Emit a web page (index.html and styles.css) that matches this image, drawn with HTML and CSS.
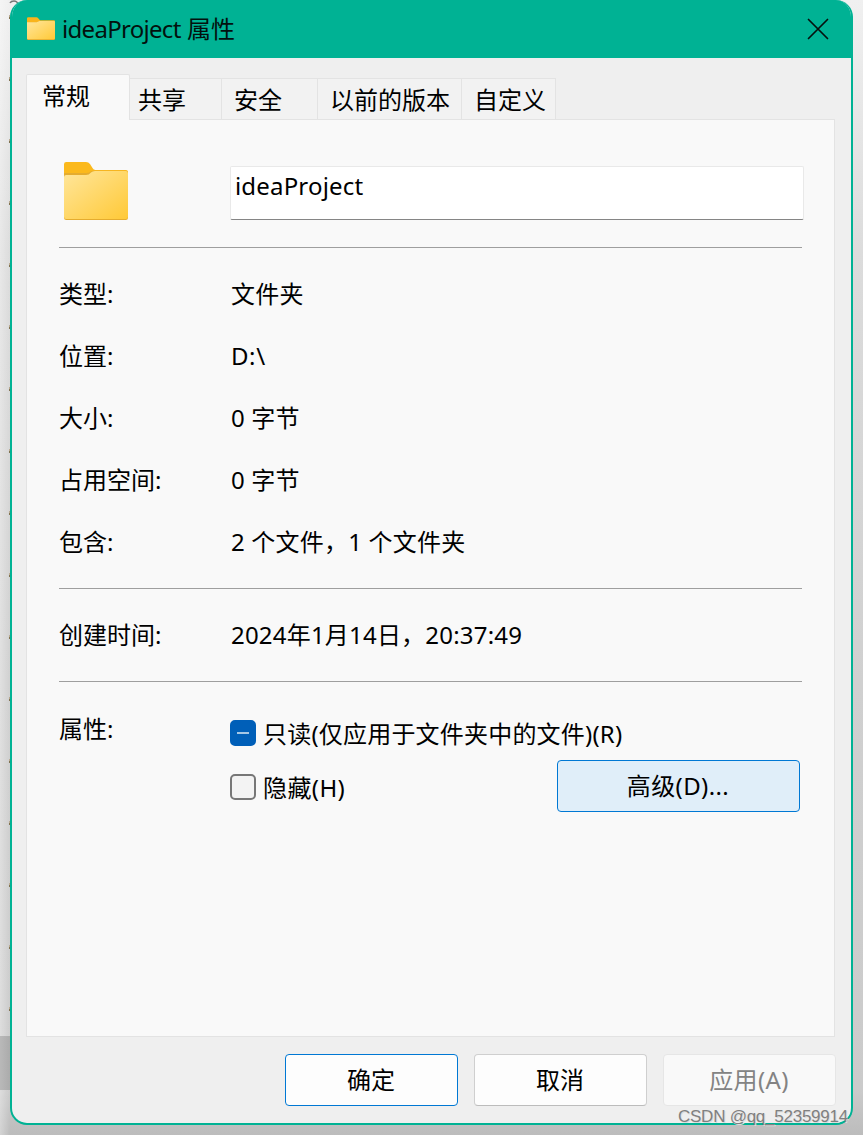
FILE: index.html
```html
<!DOCTYPE html>
<html lang="zh-CN">
<head>
<meta charset="utf-8">
<title>ideaProject 属性</title>
<link rel="stylesheet" href="styles.css">
</head>
<body>
<div class="backdrop">
  <div class="ticks"></div>
  <div class="backdrop-row"></div>
  <svg class="backdrop-mark" width="10" height="5" viewBox="0 0 10 5"><path d="M1 3Q2 1 5 1Q8 1 9 4" fill="none" stroke="#777" stroke-width="1.5"/></svg>
</div>
<main class="window">
  <header class="titlebar">
    <svg class="title-icon" width="28" height="23" viewBox="0 0 28 23">
      <defs><linearGradient id="fold" x1="0" y1="0" x2="1" y2="1"><stop offset="0" stop-color="#ffe69b"/><stop offset="1" stop-color="#ffc937"/></linearGradient></defs>
      <path d="M0 7V1.5Q0 .3 1.2 .3H9.5Q10.5 .3 11.2 1.2L13 3.2H27Q28 3.2 28 4.2V8H0z" fill="#f9b41b"/>
      <path d="M0 5.2H9.7L12.5 3.9H27Q28 3.9 28 5V21.7Q28 23 26.8 23H1.2Q0 23 0 21.7z" fill="#e3a82c"/>
      <path d="M0 5.2H9.7L12.5 3.9H27Q28 3.9 28 5V21.2Q28 22.3 26.8 22.3H1.2Q0 22.3 0 21.2z" fill="url(#fold)"/>
    </svg>
    <h1 class="title"><span class="title-name">ideaProject</span> 属性</h1>
    <svg class="close" width="22" height="22" viewBox="0 0 22 22"><path d="M1.5 1.5L20.5 20.5M20.5 1.5L1.5 20.5" stroke="#06110e" stroke-width="1.7" stroke-linecap="round"/></svg>
  </header>
  <nav class="tabs">
    <div class="tab tab-active">常规</div>
    <div class="tab tab-share">共享</div>
    <div class="tab tab-security">安全</div>
    <div class="tab tab-versions">以前的版本</div>
    <div class="tab tab-custom">自定义</div>
  </nav>
  <section class="panel">
    <div class="name-row">
      <svg class="folder" width="64" height="58" viewBox="0 0 64 58">
        <path d="M0 15V2.2Q0 0 2.2 0H22Q24.5 0 26 2L28.5 6Q29.5 8 31.5 8H62Q64 8 64 10V20H0z" fill="#fbb91c"/>
        <path d="M0 11H22Q25 11 26.8 9.5Q28 8.8 30 8.8H61.8Q64 8.8 64 11V55.8Q64 58 61.8 58H2.2Q0 58 0 55.8z" fill="#e5ac2e"/>
        <path d="M0 15Q0 13 2.2 13H22Q25 13 27 10.5Q28.5 9 31 9H61.8Q64 9 64 11.2V54.8Q64 57 61.8 57H2.2Q0 57 0 54.8z" fill="url(#fold)"/>
      </svg>
      <div class="name-field">ideaProject</div>
    </div>
    <dl class="facts facts-main">
      <dt>类型:</dt><dd>文件夹</dd>
      <dt>位置:</dt><dd class="path">D:\</dd>
      <dt>大小:</dt><dd>0 字节</dd>
      <dt>占用空间:</dt><dd>0 字节</dd>
      <dt>包含:</dt><dd>2 个文件，1 个文件夹</dd>
    </dl>
    <dl class="facts facts-date">
      <dt>创建时间:</dt><dd>2024年1月14日，20:37:49</dd>
    </dl>
    <div class="attributes">
      <div class="attr-label">属性:</div>
      <div class="attr-options">
        <div class="option"><span class="check check-mixed"></span><span class="readonly">只读(仅应用于文件夹中的文件)(R)</span></div>
        <div class="option-line">
          <div class="option"><span class="check"></span><span class="hidden-label">隐藏(H)</span></div>
          <div class="button advanced">高级(D)...</div>
        </div>
      </div>
    </div>
  </section>
  <footer class="actions">
    <div class="button primary">确定</div>
    <div class="button">取消</div>
    <div class="button disabled">应用(A)</div>
  </footer>
</main>
<div class="watermark">CSDN @qq_52359914</div>
</body>
</html>
```

FILE: styles.css
```css
* { box-sizing: border-box; }
svg { flex: none; }
body {
  margin: 0;
  width: 863px;
  height: 1135px;
  overflow: hidden;
  position: relative;
  padding-left: 10px;
  font-family: "Noto Sans", "Noto Sans CJK SC", sans-serif;
  font-size: 24px;
  line-height: 32px;
  color: #000;
  background: linear-gradient(#f0f0f0, #dcdcdc 22%, #d0d0d0 60%, #cbcbcb 96%, #bcbcbc);
}
.backdrop {
  position: absolute;
  left: 0;
  top: 0;
  width: 10px;
  height: 1135px;
  background: linear-gradient(90deg, rgba(255,255,255,.35), rgba(255,255,255,0));
}
.backdrop-row {
  position: absolute;
  top: 1036px;
  width: 10px;
  height: 54px;
  background: linear-gradient(90deg, #b9b9b9, #ababab);
}
.backdrop-mark { position: absolute; left: 9px; top: 0; }
.ticks {
  position: absolute;
  left: 9px;
  top: 15px;
  width: 1px;
  height: 1060px;
  background: repeating-linear-gradient(#b8a890 0 2px, #80724f 2px 4px, transparent 4px 62px);
}
.window {
  position: relative;
  width: 843px;
  height: 1125px;
  border: 2px solid #00b294;
  border-top: 0;
  border-radius: 17px;
  overflow: hidden;
  background: #efefef;
  display: flex;
  flex-direction: column;
}
.titlebar {
  flex: none;
  height: 58px;
  background: #00b294;
  display: flex;
  align-items: center;
  padding: 0 22px 0 15px;
}
.title-icon { margin-top: -1px; }
.title { margin: 0 0 1px 7px; font-size: 24px; font-weight: 400; color: #03110e; white-space: pre; }
.title-name { letter-spacing: -.7px; }
.close { margin-left: auto; }
.tabs {
  flex: none;
  display: flex;
  align-items: flex-end;
  height: 62px;
  padding-left: 14px;
  position: relative;
  z-index: 1;
}
.tab {
  height: 42px;
  border: 1px solid #e3e3e3;
  border-left: 0;
  background: #f2f2f2;
  padding-top: 5px;
  white-space: nowrap;
}
.tab-active {
  width: 104px;
  height: 46px;
  padding-left: 15px;
  border-left: 1px solid #e3e3e3;
  border-bottom: 0;
  border-radius: 2px 2px 0 0;
  background: #f9f9f9;
}
.tab-share { width: 92px; padding-left: 8px; }
.tab-security { width: 96px; padding-left: 12px; }
.tab-versions { width: 144px; padding-left: 12px; }
.tab-custom { width: 94px; padding-left: 12px; }
.panel {
  flex: none;
  width: 809px;
  height: 918px;
  margin: -1px 0 0 14px;
  padding: 0 31px 0 32px;
  border: 1px solid #e3e3e3;
  background: #f9f9f9;
}
.name-row {
  display: flex;
  height: 128px;
  border-bottom: 1px solid #9f9f9f;
  padding: 42px 0 0 5px;
}
.name-field {
  flex: none;
  width: 574px;
  height: 54px;
  margin: 4px 0 0 102px;
  padding: 3px 4px 0;
  border: 1px solid #e9e9e9;
  border-bottom-color: #858585;
  border-radius: 2px;
  background: #fff;
  letter-spacing: .18px;
}
.name-row, .facts { width: 743px; }
.facts {
  display: grid;
  grid-template-columns: 172px 1fr;
  grid-auto-rows: 62px;
  align-items: center;
  margin: 0;
  border-bottom: 1px solid #9f9f9f;
}
.facts dd { margin: 0; letter-spacing: .2px; }
.facts .path { letter-spacing: .6px; }
.facts-main { height: 341px; padding-top: 15px; }
.facts-date { height: 93px; padding-top: 15px; }
.attributes { display: flex; padding-top: 31px; }
.attr-label { width: 171px; }
.attr-options { width: 570px; padding-top: 3px; }
.option { display: flex; align-items: center; height: 36px; gap: 7px; white-space: nowrap; }
.readonly { letter-spacing: .2px; }
.hidden-label, .advanced { letter-spacing: .4px; }
.check {
  flex: none;
  width: 26px;
  height: 26px;
  margin-top: -3px;
  border: 2px solid #777;
  border-radius: 5px;
  background: #f3f3f3;
}
.check-mixed { display: flex; align-items: center; justify-content: center; border-color: #005fb8; background: #005fb8; }
.check-mixed::after { content: ""; width: 12px; height: 2px; background: #a5c7e5; }
.option-line { display: flex; align-items: flex-start; justify-content: space-between; margin-top: 8px; }
.option-line .option { margin-top: 10px; }
.button {
  width: 173px;
  height: 52px;
  border: 1px solid #cfcfcf;
  border-bottom-color: #bcbcbc;
  border-radius: 4px;
  background: #fdfdfd;
  display: flex;
  align-items: center;
  justify-content: center;
  padding-right: 1px;
}
.advanced { width: 243px; border-color: #0078d4; background: #e0eef9; }
.primary { border-color: #0078d4; }
.disabled { color: #838383; border-color: #e6e6e6; background: #f9f9f9; letter-spacing: .4px; }
.actions { display: flex; justify-content: flex-end; gap: 16px; padding: 17px 15px 0 0; }
.watermark {
  position: absolute;
  left: 678px;
  top: 1107px;
  font: 17px/20px "Liberation Sans", sans-serif;
  letter-spacing: -.25px;
  color: #808080;
  text-shadow: 1px 1px 0 #ddd;
  white-space: nowrap;
}
```
